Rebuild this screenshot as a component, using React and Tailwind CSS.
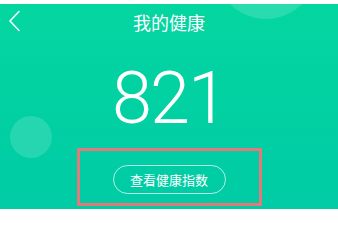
export default function App() {
  return (
    <div className="h-[214px] w-[338px] overflow-hidden bg-white pt-[4px]">
      <div
        className="relative flex h-[205px] flex-col items-center overflow-hidden bg-gradient-to-b from-[#04d6a0] to-[#00cba5]"
        style={{ fontFamily: '"Noto Sans CJK SC", "Noto Sans", sans-serif' }}
      >
        <div className="absolute left-[215px] top-[-87px] h-[102px] w-[102px] rounded-full bg-white/15" />
        <div className="absolute left-[10px] top-[112px] h-[42px] w-[42px] rounded-full bg-white/15" />

        <div className="relative flex h-[35px] w-full items-center justify-center">
          <svg
            className="absolute left-[8px] top-[6px]"
            width="13"
            height="22"
            viewBox="0 0 13 22"
            fill="none"
            stroke="white"
            strokeWidth="1.6"
            strokeLinecap="round"
            strokeLinejoin="round"
          >
            <path d="M11 1.5 L2 11 L11 20.5" />
          </svg>
          <h1 className="text-[18px] leading-none text-white">我的健康</h1>
        </div>

        <div
          className="relative mt-[24px] text-[72px] font-light leading-none tracking-[-2px] text-white"
          style={{ fontFamily: 'Roboto, "Noto Sans", sans-serif' }}
        >
          821
        </div>

        <div className="relative mt-[13px] flex h-[58px] w-[185px] items-center justify-center border-[3px] border-[#e5787a] pt-[5px]">
          <button className="flex h-[29px] w-[113px] items-center justify-center rounded-full border border-white/70 text-[13px] leading-none text-white">
            查看健康指数
          </button>
        </div>
      </div>
    </div>
  )
}
